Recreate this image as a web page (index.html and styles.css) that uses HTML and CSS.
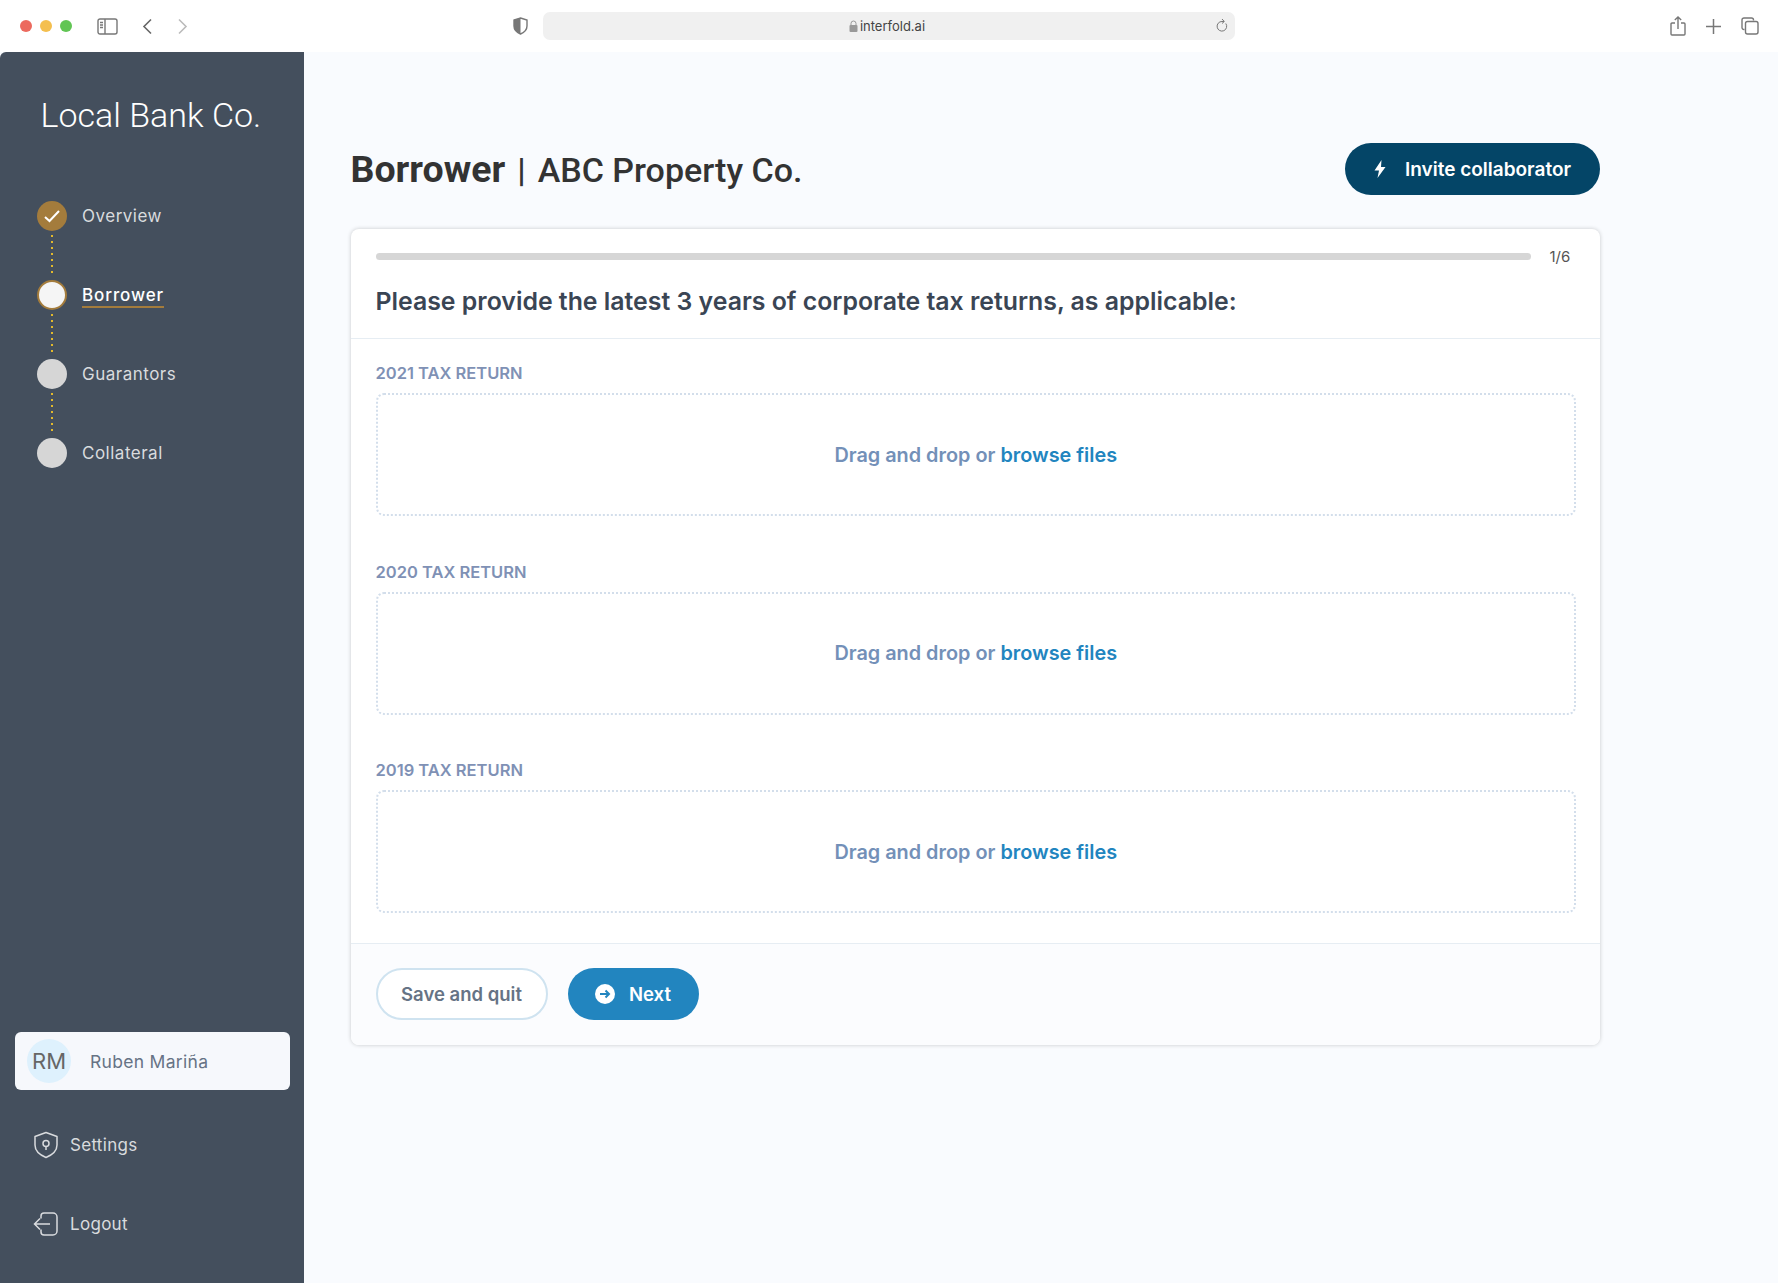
FILE: index.html
```html
<!DOCTYPE html>
<html lang="en">

<head>
  <meta charset="UTF-8" />
  <title>Borrower | ABC Property Co.</title>
  <link rel="stylesheet" href="styles.css">
</head>

<body>
  <header class="browser-bar">
    <div class="traffic">
      <span class="dot dot-red"></span>
      <span class="dot dot-yellow"></span>
      <span class="dot dot-green"></span>
    </div>
    <svg class="bar-icon sidebar-icon" width="21" height="17" viewBox="0 0 21 17" fill="none" stroke="#777" stroke-width="1.4">
      <rect x="1" y="1" width="19" height="15" rx="2" />
      <path d="M8 1v15" />
      <path d="M3 4.500h3M3 7h3M3 9.500h3" />
    </svg>
    <svg class="bar-icon back-icon" width="11" height="17" viewBox="0 0 11 17" fill="none" stroke="#666" stroke-width="1.6">
      <path d="M9 1.500 2 8.500l7 7" />
    </svg>
    <svg class="bar-icon forward-icon" width="11" height="17" viewBox="0 0 11 17" fill="none" stroke="#bbb" stroke-width="1.6">
      <path d="M2 1.500l7 7-7 7" />
    </svg>
    <svg class="bar-icon shield-icon" width="15" height="18" viewBox="0 0 15 18">
      <path d="M7.500 1 14 3v6c0 4-3 6.500-6.500 8C4 15.500 1 13 1 9V3z" fill="#fff" stroke="#777" stroke-width="1.400" />
      <path d="M7.500 1 1 3v6c0 4 3 6.500 6.500 8z" fill="#777" />
    </svg>
    <div class="url-bar">
      <span class="url-text">
        <svg width="9" height="12" viewBox="0 0 9 12" fill="#999">
          <rect x="0.500" y="5" width="8" height="7" rx="1" />
          <path d="M2 5V3.500a2.500 2.500 0 0 1 5 0V5" fill="none" stroke="#999" stroke-width="1" />
        </svg>
        interfold.ai
      </span>
      <svg class="reload-icon" width="12" height="15" viewBox="0 0 12 15" fill="none" stroke="#777" stroke-width="1">
        <path d="M9.800 5.500a4.800 4.800 0 1 1-3.800-2H8" />
        <path d="M6 1l2.300 2.500L6 5.500" />
      </svg>
    </div>
    <div class="bar-actions">
      <svg width="16" height="20" viewBox="0 0 16 20" fill="none" stroke="#777" stroke-width="1.400">
        <path d="M5 7H2a1 1 0 0 0-1 1v10a1 1 0 0 0 1 1h12a1 1 0 0 0 1-1V8a1 1 0 0 0-1-1h-3" />
        <path d="M8 13V1M4.800 4 8 1l3.200 3" />
      </svg>
      <svg width="15" height="15" viewBox="0 0 15 15" fill="none" stroke="#777" stroke-width="1.500">
        <path d="M7.500 0v15M0 7.500h15" />
      </svg>
      <svg width="18" height="18" viewBox="0 0 18 18" fill="none" stroke="#777" stroke-width="1.400">
        <path d="M3.500 12.500H3a2 2 0 0 1-2-2V3a2 2 0 0 1 2-2h7.500a2 2 0 0 1 2 2v.5" />
        <rect x="4.500" y="4.500" width="12.500" height="12.500" rx="2" />
      </svg>
    </div>
  </header>

  <div class="app">
    <aside class="sidebar">
      <h1 class="brand">Local Bank Co.</h1>

      <nav class="steps">
        <div class="step">
          <span class="step-dot step-done">
            <svg width="18" height="14" viewBox="0 0 18 14" fill="none" stroke="#fff" stroke-width="2">
              <path d="M2 8l4.500 4L16 2" />
            </svg>
          </span>
          <span class="step-label">Overview</span>
        </div>
        <div class="step-line"></div>
        <div class="step">
          <span class="step-dot step-current"></span>
          <span class="step-label step-label-current">Borrower</span>
        </div>
        <div class="step-line"></div>
        <div class="step">
          <span class="step-dot"></span>
          <span class="step-label">Guarantors</span>
        </div>
        <div class="step-line"></div>
        <div class="step">
          <span class="step-dot"></span>
          <span class="step-label">Collateral</span>
        </div>
      </nav>

      <div class="user-card">
        <span class="avatar">RM</span>
        <span class="user-name">Ruben Mariña</span>
      </div>

      <a class="side-link settings-link" href="#">
        <svg width="26" height="28" viewBox="0 0 26 28" fill="none" stroke="#d9dbde" stroke-width="1.500">
          <path d="M13 1.500 24 5.500V14c0 6-5 10-11 12.500C7 24 2 20 2 14V5.500z" stroke-linejoin="round" />
          <circle cx="13" cy="12.500" r="3" />
          <path d="M13 15.500V19" />
        </svg>
        Settings
      </a>
      <a class="side-link" href="#">
        <svg width="26" height="26" viewBox="0 0 26 26" fill="none" stroke="#d9dbde" stroke-width="1.500">
          <path d="M8 7V5a3 3 0 0 1 3-3h9a4 4 0 0 1 4 4v14a4 4 0 0 1-4 4h-9a3 3 0 0 1-3-3v-2" stroke-linecap="round" />
          <path d="M17 13H2M7 7.500 1.500 13 7 18.500" />
        </svg>
        Logout
      </a>
    </aside>

    <main class="content">
      <div class="page-head">
        <h2 class="page-title"><strong>Borrower</strong><span class="title-sep">|</span>ABC Property Co.</h2>
        <button class="btn btn-invite">
          <svg width="12" height="18" viewBox="0 0 12 18" fill="#fff">
            <path d="M7.500 0 0.500 10.500H5L3.500 18l8-11H7z" />
          </svg>
          Invite collaborator
        </button>
      </div>

      <section class="card">
        <div class="card-head">
          <div class="progress-row">
            <div class="progress"></div>
            <span class="progress-count">1/6</span>
          </div>
          <h3 class="question">Please provide the latest 3 years of corporate tax returns, as applicable:</h3>
        </div>

        <div class="card-body">
          <div class="upload">
            <label class="upload-label">2021 TAX RETURN</label>
            <div class="dropzone">Drag and drop or&nbsp;<a href="#">browse files</a></div>
          </div>
          <div class="upload">
            <label class="upload-label">2020 TAX RETURN</label>
            <div class="dropzone">Drag and drop or&nbsp;<a href="#">browse files</a></div>
          </div>
          <div class="upload">
            <label class="upload-label">2019 TAX RETURN</label>
            <div class="dropzone">Drag and drop or&nbsp;<a href="#">browse files</a></div>
          </div>
        </div>

        <div class="card-foot">
          <button class="btn btn-save">Save and quit</button>
          <button class="btn btn-next">
            <svg width="20" height="20" viewBox="0 0 20 20">
              <circle cx="10" cy="10" r="10" fill="#fff" />
              <path d="M5 10h9M10.500 6.500 14 10l-3.500 3.500" fill="none" stroke="#2285bf" stroke-width="2" />
            </svg>
            Next
          </button>
        </div>
      </section>
    </main>
  </div>
</body>

</html>
```

FILE: styles.css
```css
* {
  box-sizing: border-box;
}

html,
body {
  margin: 0;
  padding: 0;
  height: 100%;
  background: #fff;
  font-family: Roboto, 'Liberation Sans', sans-serif;
  overflow: hidden;
}

body {
  display: flex;
  flex-direction: column;
}

/* browser chrome */
.browser-bar {
  display: flex;
  align-items: center;
  height: 52px;
  flex-shrink: 0;
  padding: 0 19px 0 20px;
  background: #fff;
}

.traffic {
  display: flex;
  gap: 8px;
}

.dot {
  width: 12px;
  height: 12px;
  border-radius: 50%;
}

.dot-red {
  background: #ec6a5e;
}

.dot-yellow {
  background: #f4bf4f;
}

.dot-green {
  background: #61c554;
}

.sidebar-icon {
  margin-left: 25px;
}

.back-icon {
  margin-left: 24px;
}

.forward-icon {
  margin-left: 24px;
}

.shield-icon {
  margin-left: 325px;
}

.url-bar {
  position: relative;
  display: flex;
  align-items: center;
  justify-content: center;
  width: 692px;
  height: 28px;
  margin-left: 15px;
  padding-right: 4px;
  background: #f0f0f0;
  border-radius: 7px;
}

.url-text {
  display: flex;
  align-items: center;
  gap: 2px;
  font-family: Inter, sans-serif;
  font-size: 13px;
  color: #444;
}

.reload-icon {
  position: absolute;
  right: 7px;
  top: 6px;
}

.bar-actions {
  display: flex;
  align-items: center;
  gap: 20px;
  margin-left: auto;
}

/* layout */
.app {
  display: flex;
  flex: 1;
  min-height: 0;
  background: #f9fbfe;
}

.sidebar {
  display: flex;
  flex-direction: column;
  width: 304px;
  flex-shrink: 0;
  padding: 0 14px 44px 15px;
  background: #444f5d;
  border-top-left-radius: 6px;
}

.brand {
  margin: 40px 0 0 25.500px;
  font-size: 34px;
  line-height: 46px;
  font-weight: 300;
  color: #fff;
  white-space: nowrap;
}

.steps {
  display: flex;
  flex-direction: column;
  margin: 63px 0 0 22px;
}

.step {
  display: flex;
  align-items: center;
  gap: 15px;
  height: 30px;
}

.step-dot {
  display: flex;
  align-items: center;
  justify-content: center;
  width: 30px;
  height: 30px;
  flex-shrink: 0;
  border-radius: 50%;
  background: #d6d6d6;
}

.step-done {
  background: #a47c3c;
}

.step-current {
  background: #f5f5f5;
  border: 2.5px solid #a47c3c;
}

.step-label {
  font-family: Inter, sans-serif;
  font-size: 17px;
  letter-spacing: 0.5px;
  color: #d9dbde;
}

.step-label-current {
  font-weight: 500;
  letter-spacing: 0.9px;
  color: #fff;
  border-bottom: 2px solid #a47c3c;
  padding-top: 3px;
  padding-bottom: 1px;
}

.step-line {
  width: 2px;
  height: 41px;
  margin: 4px 0 4px 14px;
  background: repeating-linear-gradient(to bottom, #e2b92c 0, #e2b92c 2px, transparent 2px, transparent 6px);
}

.user-card {
  display: flex;
  align-items: center;
  gap: 19px;
  height: 58px;
  margin-top: auto;
  padding-left: 12px;
  background: #f6f8fc;
  border-radius: 6px;
}

.avatar {
  display: flex;
  align-items: center;
  justify-content: center;
  width: 44px;
  height: 44px;
  border-radius: 50%;
  background: #def1fd;
  font-family: Inter, sans-serif;
  font-size: 22px;
  color: #666;
}

.user-name {
  font-family: Inter, sans-serif;
  font-size: 17.500px;
  letter-spacing: 0.3px;
  color: #667385;
}

.side-link {
  display: flex;
  align-items: center;
  gap: 11px;
  height: 30px;
  margin: 0 0 0 18px;
  font-family: Inter, sans-serif;
  font-size: 17px;
  letter-spacing: 0.3px;
  color: #d9dbde;
  text-decoration: none;
}

.settings-link {
  margin-top: 40px;
  margin-bottom: 49px;
}

/* main */
.content {
  flex: 1;
  padding: 91px 178px 0 46.500px;
}

.page-head {
  display: flex;
  align-items: center;
  justify-content: space-between;
  height: 52px;
}

.page-title {
  display: flex;
  align-items: baseline;
  margin: 0;
  font-size: 34px;
  font-weight: 500;
  color: #333;
}

.page-title strong {
  font-size: 37.500px;
  font-weight: 700;
}

.title-sep {
  margin: 0 12px;
}

.btn {
  display: inline-flex;
  align-items: center;
  justify-content: center;
  height: 52px;
  border: none;
  border-radius: 26px;
  font-family: Inter, sans-serif;
  font-size: 18.500px;
  font-weight: 600;
  cursor: pointer;
}

.btn-invite {
  gap: 19px;
  width: 255px;
  background: #044567;
  font-size: 19px;
  color: #fff;
}

.card {
  margin-top: 34px;
  background: #fff;
  border-radius: 8px;
  box-shadow: 0 0 4px rgba(0, 0, 0, 0.2);
  overflow: hidden;
}

.card-head {
  height: 110px;
  padding: 23px 25px 0;
  border-bottom: 1px solid #e6edf3;
}

.progress-row {
  display: flex;
  align-items: center;
  height: 8px;
}

.progress {
  width: 1155px;
  height: 7px;
  border-radius: 4px;
  background: #d6d6d6;
}

.progress-count {
  margin-left: 19px;
  font-family: Inter, sans-serif;
  font-size: 15px;
  color: #555;
}

.question {
  margin: 25px 0 0;
  font-family: Inter, sans-serif;
  font-size: 24.850px;
  line-height: 32px;
  font-weight: 600;
  color: #3a4554;
}

.card-body {
  display: flex;
  flex-direction: column;
  gap: 45.500px;
  padding: 24px 24px 30px 25px;
}

.upload-label {
  display: block;
  margin-bottom: 10px;
  font-family: Inter, sans-serif;
  font-size: 16.500px;
  line-height: 20px;
  font-weight: 600;
  color: #7f91b5;
}

.dropzone {
  display: flex;
  align-items: center;
  justify-content: center;
  height: 123px;
  border: 2px dotted #d3deeb;
  border-radius: 8px;
  font-family: Inter, sans-serif;
  font-size: 19.850px;
  font-weight: 600;
  color: #7390b8;
}

.dropzone a {
  color: #2285bf;
  text-decoration: none;
}

.card-foot {
  display: flex;
  gap: 20px;
  padding: 24px 25px 25px;
  background: #fbfcfe;
  border-top: 1px solid #e6edf3;
}

.btn-save {
  width: 172px;
  background: #fff;
  border: 2px solid #cfe3f0;
  color: #667385;
}

.btn-next {
  gap: 14px;
  width: 131px;
  background: #2285bf;
  color: #fff;
}
```
